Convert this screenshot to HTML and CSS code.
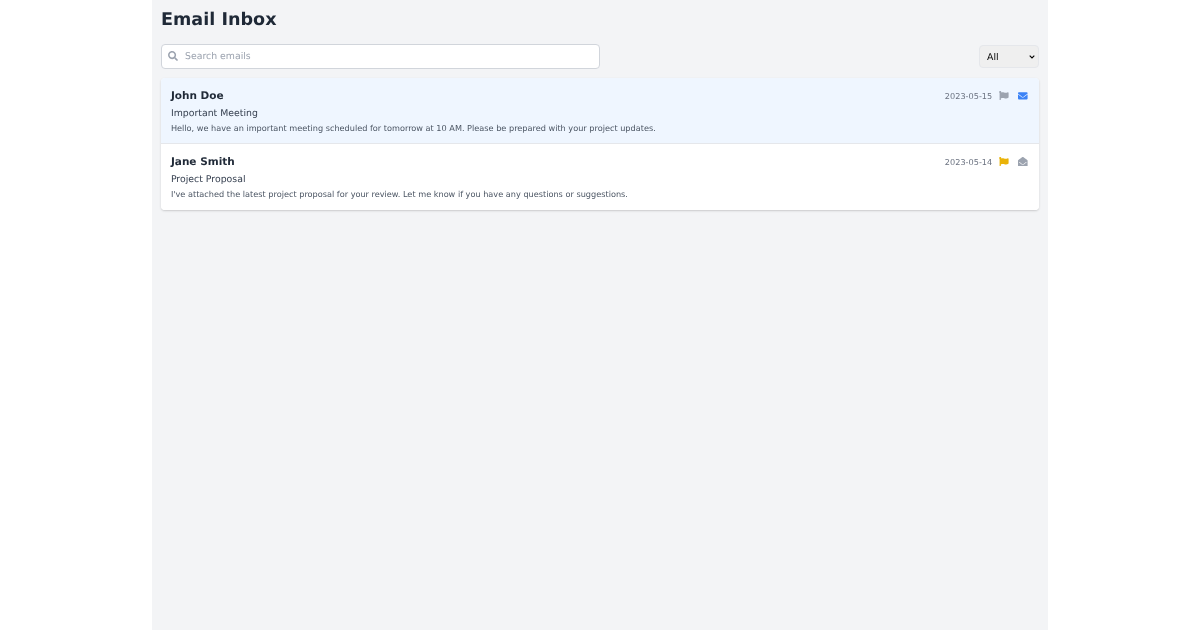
FILE: index.html
```html
<!DOCTYPE html>
<html lang="en">
<head>
<meta charset="utf-8">
<title>Email Inbox</title>
<link rel="stylesheet" href="styles.css">
</head>
<body>
<main class="app">
  <h1 class="title">Email Inbox</h1>
  <div class="toolbar">
    <label class="search">
      <svg class="search-icon" viewBox="0 0 512 512"><path d="M505 442.7L405.3 343c-4.5-4.5-10.6-7-17-7H372c27.6-35.3 44-79.7 44-128C416 93.1 322.9 0 208 0S0 93.1 0 208s93.1 208 208 208c48.3 0 92.7-16.4 128-44v16.3c0 6.4 2.5 12.5 7 17l99.7 99.7c9.4 9.4 24.6 9.4 33.9 0l28.3-28.3c9.4-9.4 9.4-24.6.1-34zM208 336c-70.7 0-128-57.2-128-128 0-70.7 57.2-128 128-128 70.7 0 128 57.2 128 128 0 70.7-57.2 128-128 128z"/></svg>
      <input class="search-input" type="text" placeholder="Search emails">
    </label>
    <select class="filter"><option>All</option><option>Unread</option><option>Flagged</option></select>
  </div>
  <section class="list">
    <article class="email unread">
      <div class="email-head">
        <span class="sender">John Doe</span>
        <div class="meta">
          <span class="date">2023-05-15</span>
          <svg class="icon grey" viewBox="0 0 512 512"><path d="M349.565 98.783C295.978 98.783 251.721 64 184.348 64c-24.955 0-47.309 4.384-68.045 12.013a55.947 55.947 0 0 0 3.586-23.562C118.117 24.015 94.806 1.206 66.338.048 34.345-1.254 8 24.296 8 56c0 19.026 9.497 35.825 24 45.945V488c0 13.255 10.745 24 24 24h16c13.255 0 24-10.745 24-24v-94.4c28.311-12.064 63.582-22.122 114.435-22.122 53.588 0 97.844 34.783 165.217 34.783 48.169 0 86.667-16.294 122.505-40.858C506.84 359.452 512 349.571 512 339.045v-243.1c0-23.393-24.269-38.87-45.485-29.016-34.338 15.948-76.454 31.854-116.95 31.854z"/></svg>
          <svg class="icon blue" viewBox="0 0 512 512"><path d="M502.3 190.8c3.9-3.1 9.7-.2 9.7 4.7V400c0 26.5-21.5 48-48 48H48c-26.5 0-48-21.5-48-48V195.6c0-5 5.7-7.8 9.7-4.7 22.4 17.4 52.1 39.5 154.1 113.6 21.1 15.4 56.7 47.8 92.2 47.6 35.7.3 72-32.8 92.3-47.6 102-74.1 131.6-96.3 154-113.7zM256 320c23.2.4 56.6-29.2 73.4-41.4 132.7-96.3 142.8-104.7 173.4-128.7 5.8-4.5 9.2-11.5 9.2-18.9v-19c0-26.5-21.5-48-48-48H48C21.5 64 0 85.5 0 112v19c0 7.4 3.4 14.3 9.2 18.9 30.6 23.9 40.7 32.4 173.4 128.7 16.8 12.2 50.2 41.8 73.4 41.4z"/></svg>
        </div>
      </div>
      <div class="subject">Important Meeting</div>
      <p class="preview">Hello, we have an important meeting scheduled for tomorrow at 10 AM. Please be prepared with your project updates.</p>
    </article>
    <article class="email">
      <div class="email-head">
        <span class="sender">Jane Smith</span>
        <div class="meta">
          <span class="date">2023-05-14</span>
          <svg class="icon yellow" viewBox="0 0 512 512"><path d="M349.565 98.783C295.978 98.783 251.721 64 184.348 64c-24.955 0-47.309 4.384-68.045 12.013a55.947 55.947 0 0 0 3.586-23.562C118.117 24.015 94.806 1.206 66.338.048 34.345-1.254 8 24.296 8 56c0 19.026 9.497 35.825 24 45.945V488c0 13.255 10.745 24 24 24h16c13.255 0 24-10.745 24-24v-94.4c28.311-12.064 63.582-22.122 114.435-22.122 53.588 0 97.844 34.783 165.217 34.783 48.169 0 86.667-16.294 122.505-40.858C506.84 359.452 512 349.571 512 339.045v-243.1c0-23.393-24.269-38.87-45.485-29.016-34.338 15.948-76.454 31.854-116.95 31.854z"/></svg>
          <svg class="icon grey" viewBox="0 0 512 512"><path d="M512 464c0 26.51-21.49 48-48 48H48c-26.51 0-48-21.49-48-48V200.724a48 48 0 0 1 18.387-37.776c24.913-19.529 45.501-35.365 164.2-121.511C199.412 29.17 232.797-.347 256 .003c23.198-.354 56.596 29.172 73.413 41.433 118.687 86.137 139.303 101.995 164.2 121.512A48 48 0 0 1 512 200.724V464zm-65.666-196.605c-2.563-3.728-7.7-4.595-11.339-1.907-22.845 16.873-55.462 40.705-105.582 77.079-16.825 12.266-50.21 41.781-73.413 41.43-23.211.344-56.559-29.143-73.413-41.43-50.114-36.37-82.734-60.204-105.582-77.079-3.639-2.688-8.776-1.821-11.339 1.907l-9.072 13.196a7.998 7.998 0 0 0 1.839 10.967c22.887 16.899 55.454 40.69 105.303 76.868 20.274 14.781 56.524 47.813 92.264 47.573 35.724.242 71.961-32.771 92.263-47.573 49.85-36.179 82.418-59.97 105.303-76.868a7.998 7.998 0 0 0 1.839-10.967l-9.071-13.196z"/></svg>
        </div>
      </div>
      <div class="subject">Project Proposal</div>
      <p class="preview">I've attached the latest project proposal for your review. Let me know if you have any questions or suggestions.</p>
    </article>
  </section>
</main>
</body>
</html>
```

FILE: styles.css
```css
* { box-sizing: border-box; }
html, body { margin: 0; height: 100%; background: #fff; }
body { font-family: "DejaVu Sans", sans-serif; text-rendering: geometricPrecision; }
.app {
  width: 896px;
  height: 630px;
  margin: 0 auto;
  padding: 10px 9px 9px;
  background: #f3f4f6;
  overflow: hidden;
  will-change: transform;
}
.title {
  margin: 0 0 13.4px;
  font-size: 17.6px;
  line-height: 21px;
  font-weight: 700;
  color: #1f2937;
}
.toolbar {
  display: flex;
  justify-content: space-between;
  align-items: center;
  margin-bottom: 9px;
}
.search { position: relative; display: block; width: 439px; }
.search-icon {
  position: absolute;
  left: 7px;
  top: 7px;
  width: 10px;
  height: 10px;
  fill: #9ca3af;
}
.search-input {
  display: block;
  width: 100%;
  height: 25px;
  padding: 0 8px 0 23px;
  border: 1px solid #d1d5db;
  border-radius: 4px;
  background: #fff;
  font: 9.35px "DejaVu Sans", sans-serif;
  text-rendering: geometricPrecision;
  color: #1f2937;
}
.search-input::placeholder { color: #9ca3af; opacity: 1; }
.filter {
  appearance: none;
  width: 60px;
  height: 23px;
  padding: 1px 3px 0 7px;
  border: 1px solid #e5e7eb;
  border-radius: 4px;
  background: #efefef url("data:image/svg+xml,%3Csvg xmlns='http://www.w3.org/2000/svg' viewBox='0 0 6 4'%3E%3Cpath d='M.7.7 3 3l2.3-2.3' fill='none' stroke='%23000' stroke-width='1.1'/%3E%3C/svg%3E") no-repeat right 2.6px center / 6px 4px;
  font: 9.35px "DejaVu Sans", sans-serif;
  text-rendering: geometricPrecision;
  color: #000;
}
.list {
  border-radius: 4px;
  background: #fff;
  box-shadow: 0 1px 2.5px rgba(0,0,0,.12), 0 1px 1.5px rgba(0,0,0,.06);
  overflow: hidden;
}
.email {
  height: 66px;
  padding: 10px 9.6px 0 9.9px;
  border-bottom: 1px solid #e5e7eb;
  background: #fff;
}
.email:last-child { border-bottom: 0; height: 65.5px; }
.email.unread { background: #eff6ff; }
.email-head {
  display: flex;
  justify-content: space-between;
  align-items: center;
  height: 15px;
  margin-bottom: 4px;
}
.sender { margin-top: 2px; font-size: 10.5px; line-height: 15px; font-weight: 700; color: #1f2937; }
.meta { display: flex; align-items: center; padding-right: 1.6px; }
.date { font-size: 8.16px; color: #6b7280; margin-right: 6.8px; }
.icon { width: 9.6px; height: 9.6px; margin-top: -1px; }
.icon + .icon { margin-left: 9.6px; }
.grey { fill: #9ca3af; }
.blue { fill: #3b82f6; }
.yellow { fill: #eab308; }
.subject { font-size: 9.35px; line-height: 14px; color: #374151; margin-bottom: 1px; }
.preview { margin: 0; font-size: 8.16px; line-height: 12px; color: #4b5563; }
```
